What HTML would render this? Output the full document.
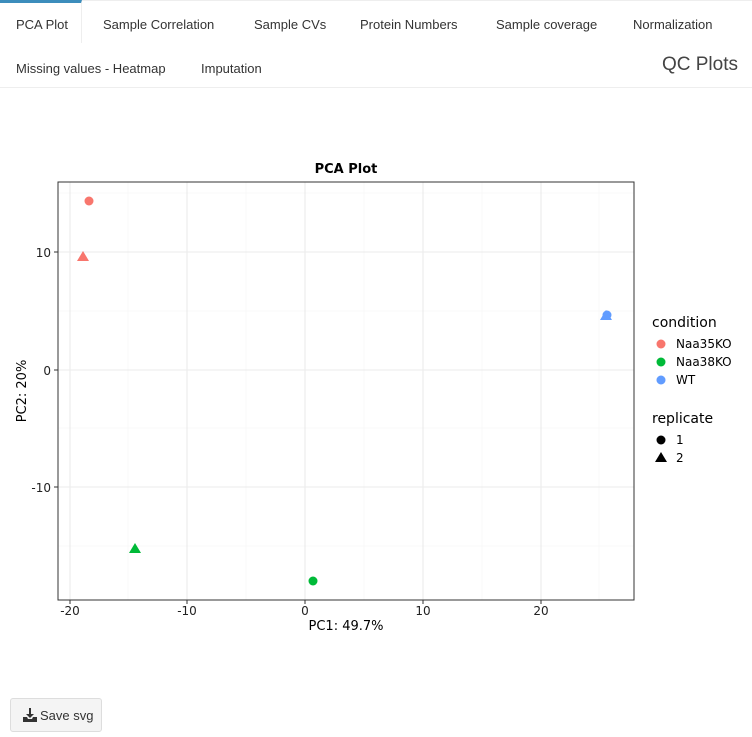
<!DOCTYPE html>
<html><head><meta charset="utf-8"><style>
body{margin:0;width:752px;height:737px;background:#fff;font-family:"Liberation Sans",sans-serif;position:relative;overflow:hidden}
.tab{position:absolute;font-size:13px;color:#333;}
.active{position:absolute;left:0;top:0;width:82px;height:43px;border-top:3px solid #3c8dbc;box-sizing:border-box;border-right:1px solid #eee;background:#fff}
.topline{position:absolute;left:0;top:0;width:752px;height:1px;background:#eee}
.bottomline{position:absolute;left:0;top:87px;width:752px;height:1px;background:#eee}
.title{position:absolute;right:14px;top:54px;font-size:19px;color:#444}
.btn{position:absolute;left:10px;top:698px;width:92px;height:34px;box-sizing:border-box;border:1px solid #ddd;border-radius:3px;background:#f4f4f4;font-size:13px;color:#333}
</style></head><body>
<div class="topline"></div>
<div class="active"></div>
<div class="tab" style="left:16px;top:17px">PCA Plot</div>
<div class="tab" style="left:103px;top:17px">Sample Correlation</div>
<div class="tab" style="left:254px;top:17px">Sample CVs</div>
<div class="tab" style="left:360px;top:17px">Protein Numbers</div>
<div class="tab" style="left:496px;top:17px">Sample coverage</div>
<div class="tab" style="left:633px;top:17px">Normalization</div>
<div class="tab" style="left:16px;top:61px">Missing values - Heatmap</div>
<div class="tab" style="left:201px;top:61px">Imputation</div>
<div class="title">QC Plots</div>
<div class="bottomline"></div>
<svg style="position:absolute;left:0;top:0" width="752" height="690" font-family="DejaVu Sans,sans-serif">
<text x="346" y="173" font-size="13" font-weight="bold" text-anchor="middle" fill="#000">PCA Plot</text>
<rect x="58" y="182" width="576" height="418" fill="#fff"/>
<g stroke="#f3f3f3" stroke-width="0.6">
<line x1="128" y1="182" x2="128" y2="600"/><line x1="246" y1="182" x2="246" y2="600"/><line x1="364" y1="182" x2="364" y2="600"/><line x1="482" y1="182" x2="482" y2="600"/><line x1="599" y1="182" x2="599" y2="600"/>
<line x1="58" y1="193" x2="634" y2="193"/><line x1="58" y1="311" x2="634" y2="311"/><line x1="58" y1="428" x2="634" y2="428"/><line x1="58" y1="546" x2="634" y2="546"/>
</g>
<g stroke="#ebebeb" stroke-width="1.1">
<line x1="70" y1="182" x2="70" y2="600"/><line x1="187" y1="182" x2="187" y2="600"/><line x1="305" y1="182" x2="305" y2="600"/><line x1="423" y1="182" x2="423" y2="600"/><line x1="541" y1="182" x2="541" y2="600"/>
<line x1="58" y1="252" x2="634" y2="252"/><line x1="58" y1="370" x2="634" y2="370"/><line x1="58" y1="487" x2="634" y2="487"/>
</g>
<rect x="58" y="182" width="576" height="418" fill="none" stroke="#333" stroke-width="1"/>
<g stroke="#333"><line x1="70" y1="600" x2="70" y2="604"/><line x1="187" y1="600" x2="187" y2="604"/><line x1="305" y1="600" x2="305" y2="604"/><line x1="423" y1="600" x2="423" y2="604"/><line x1="541" y1="600" x2="541" y2="604"/>
<line x1="54" y1="252" x2="58" y2="252"/><line x1="54" y1="370" x2="58" y2="370"/><line x1="54" y1="487" x2="58" y2="487"/></g>
<g font-size="12" fill="#222" text-anchor="middle">
<text x="70" y="615">-20</text><text x="187" y="615">-10</text><text x="305" y="615">0</text><text x="423" y="615">10</text><text x="541" y="615">20</text></g>
<g font-size="12" fill="#222" text-anchor="end">
<text x="51" y="257">10</text><text x="51" y="375">0</text><text x="51" y="492">-10</text></g>
<text x="346" y="630" font-size="13" text-anchor="middle">PC1: 49.7%</text>
<text transform="translate(26,391) rotate(-90)" font-size="13" text-anchor="middle">PC2: 20%</text>
<circle cx="89" cy="201" r="4.5" fill="#f8766d"/>
<polygon points="83,251 89,261 77,261" fill="#f8766d"/>
<polygon points="135,543 141,553 129,553" fill="#00ba38"/>
<circle cx="313" cy="581" r="4.5" fill="#00ba38"/>
<polygon points="606,310 612,320 600,320" fill="#619cff"/>
<circle cx="607" cy="315" r="4.5" fill="#619cff"/>
<text x="652" y="327" font-size="14" fill="#000">condition</text>
<circle cx="661" cy="344" r="4.5" fill="#f8766d"/><text x="676" y="348" font-size="12">Naa35KO</text>
<circle cx="661" cy="362" r="4.5" fill="#00ba38"/><text x="676" y="366" font-size="12">Naa38KO</text>
<circle cx="661" cy="380" r="4.5" fill="#619cff"/><text x="676" y="384" font-size="12">WT</text>
<text x="652" y="423" font-size="14" fill="#000">replicate</text>
<circle cx="661" cy="440" r="4.5" fill="#000"/><text x="676" y="444" font-size="12">1</text>
<polygon points="661,452 667,462 655,462" fill="#000"/><text x="676" y="462" font-size="12">2</text>
</svg>
<div class="btn"><svg style="position:absolute;left:12px;top:9px" width="14" height="14" viewBox="0 0 14 14"><path d="M6 0h2v6h3l-4 4-4-4h3z" fill="#333"/><path d="M0 9h4l1 2h4l1-2h4v5H0z" fill="#333"/></svg><span style="position:absolute;left:29px;top:9px">Save svg</span></div>
</body></html>
